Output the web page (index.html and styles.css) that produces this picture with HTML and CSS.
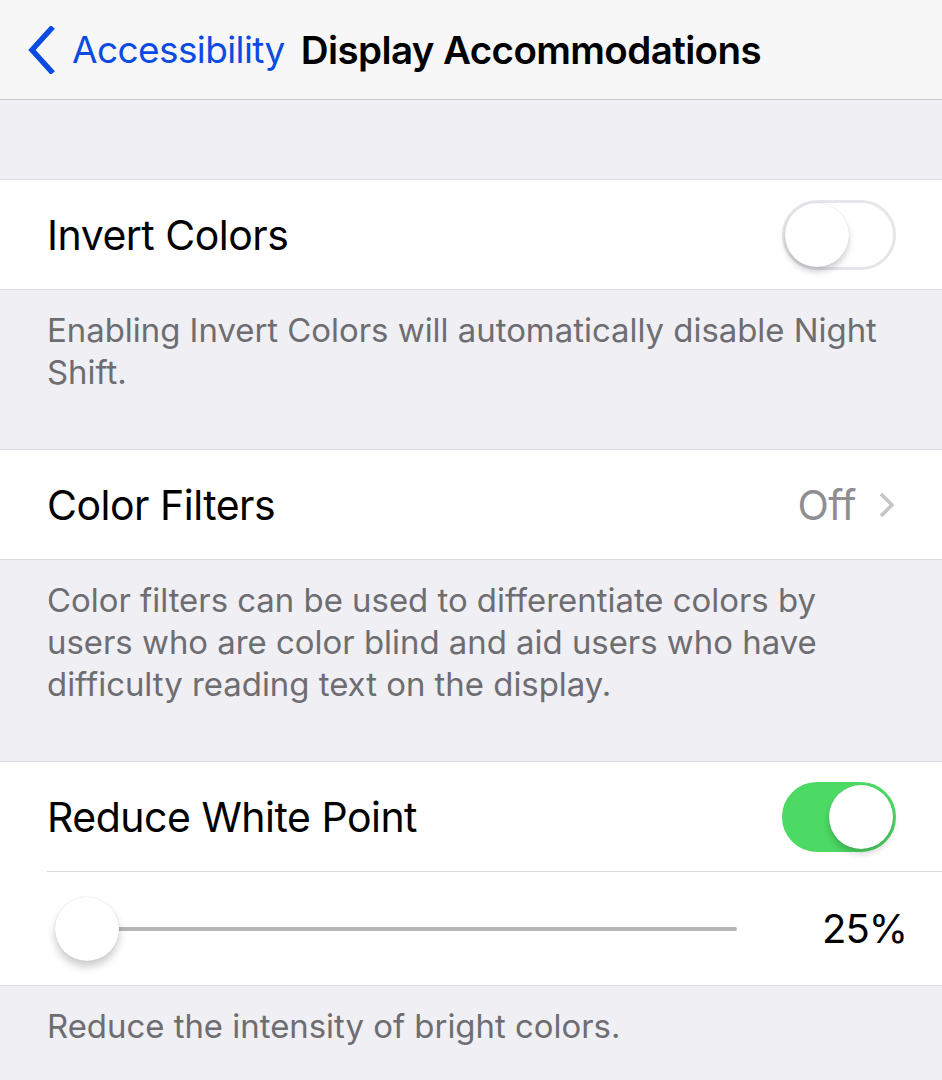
FILE: index.html
```html
<!DOCTYPE html>
<html lang="en">
<head>
  <meta charset="UTF-8">
  <title>Display Accommodations</title>
  <link rel="stylesheet" href="styles.css">
</head>
<body>

<header class="navbar">
  <a class="back" href="#">
    <svg class="back-chevron" width="30" height="48" viewBox="0 0 30 48">
      <path d="M25 3 L6 24 L25 45" fill="none" stroke="#0b4be0" stroke-width="5.5" stroke-linecap="square" stroke-linejoin="miter"/>
    </svg>
    <span>Accessibility</span>
  </a>
  <h1 class="title">Display Accommodations</h1>
</header>

<main class="settings">
  <div class="gap"></div>

  <section class="group">
    <div class="cell">
      <span class="cell-label">Invert Colors</span>
      <span class="switch"><span class="knob"></span></span>
    </div>
  </section>
  <p class="note">Enabling Invert Colors will automatically disable Night Shift.</p>

  <section class="group">
    <div class="cell">
      <span class="cell-label">Color Filters</span>
      <span class="detail">
        Off
        <svg class="chevron" width="18" height="30" viewBox="0 0 18 30">
          <path d="M3 4 L14 15 L3 26" fill="none" stroke="#c4c4c9" stroke-width="3.5"/>
        </svg>
      </span>
    </div>
  </section>
  <p class="note">Color filters can be used to differentiate colors by users who are color blind and aid users who have difficulty reading text on the display.</p>

  <section class="group">
    <div class="cell">
      <span class="cell-label">Reduce White Point</span>
      <span class="switch on"><span class="knob"></span></span>
    </div>
    <div class="cell slider-cell">
      <div class="slider">
        <span class="slider-thumb"></span>
        <span class="slider-track"></span>
      </div>
      <span class="value">25%</span>
    </div>
  </section>
  <p class="note">Reduce the intensity of bright colors.</p>
</main>

</body>
</html>
```

FILE: styles.css
```css
body {
  margin: 0;
  padding: 0;
  background-color: #efeff4;
  font-family: Inter, "Noto Sans", sans-serif;
  color: #000;
}

.navbar {
  height: 100px;
  background-color: #f7f7f8;
  border-bottom: 1px solid #c8c7cc;
  display: flex;
  align-items: center;
  box-sizing: border-box;
  padding-left: 26px;
}

.back {
  display: flex;
  align-items: center;
  color: #0b4be0;
  text-decoration: none;
  font-size: 37px;
  letter-spacing: -0.6px;
}

.back-chevron {
  margin-right: 16px;
}

.title {
  margin: 0 0 0 16px;
  font-size: 38.5px;
  font-weight: 600;
  letter-spacing: -0.6px;
}

.gap {
  height: 79px;
}

.group {
  background-color: #fff;
  border-top: 1px solid #dcdce0;
  border-bottom: 1px solid #dcdce0;
}

.cell {
  height: 109px;
  display: flex;
  align-items: center;
  justify-content: space-between;
  padding: 0 46px 0 47px;
}

.cell-label {
  font-size: 41px;
  letter-spacing: -0.5px;
}

.switch {
  width: 114px;
  height: 70px;
  border-radius: 35px;
  box-sizing: border-box;
  border: 3px solid #e6e6ea;
  background-color: #fff;
  position: relative;
}

.switch .knob {
  position: absolute;
  top: 0;
  left: 0;
  width: 64px;
  height: 64px;
  border-radius: 50%;
  background-color: #fff;
  box-shadow: 0 5px 6px rgba(0, 0, 0, 0.18), 0 0 1px rgba(0, 0, 0, 0.2);
}

.switch.on {
  background-color: #4cd964;
  border-color: #4cd964;
}

.switch.on .knob {
  left: 44px;
}

.detail {
  display: flex;
  align-items: center;
  color: #8e8e93;
  font-size: 41px;
  letter-spacing: -0.5px;
}

.chevron {
  margin-left: 22px;
}

.slider-cell {
  height: 113px;
  margin-left: 47px;
  padding-left: 8px;
  padding-right: 35px;
  border-top: 1px solid #dcdce0;
}

.slider {
  position: relative;
  width: 682px;
  height: 64px;
  display: flex;
  align-items: center;
}

.slider-track {
  display: block;
  width: 100%;
  height: 4px;
  border-radius: 2px;
  background-color: #b6b6b6;
}

.slider-thumb {
  position: absolute;
  left: 0;
  top: 0;
  width: 64px;
  height: 64px;
  border-radius: 50%;
  background-color: #fff;
  box-shadow: 0 6px 9px rgba(0, 0, 0, 0.2), 0 0 1px rgba(0, 0, 0, 0.2);
}

.value {
  font-size: 40px;
  letter-spacing: -1px;
}

.note {
  margin: 0;
  padding: 19px 47px 56px;
  font-size: 32.9px;
  line-height: 42px;
  color: #6d6d72;
}
```
